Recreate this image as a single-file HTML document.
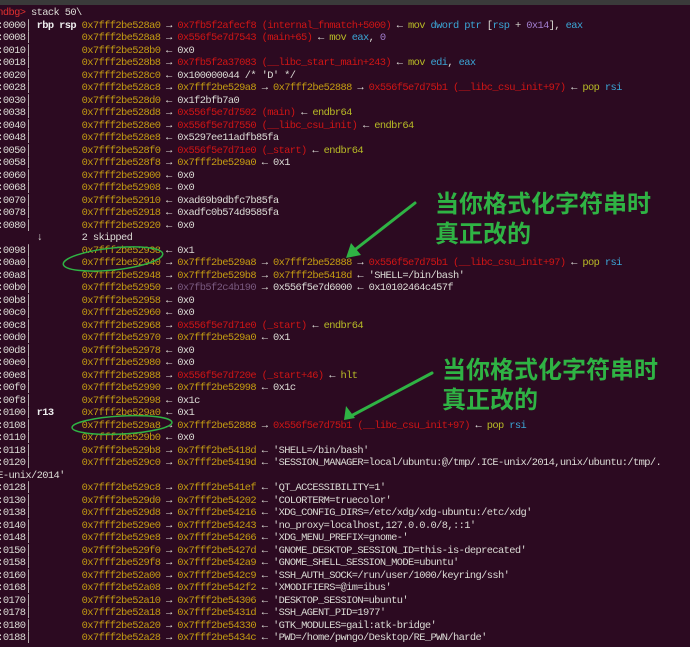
<!DOCTYPE html>
<html><head><meta charset="utf-8"><style>
html,body{margin:0;padding:0;width:690px;height:647px;overflow:hidden;background:#2c0a21;}
#bar{position:absolute;left:0;top:0;width:690px;height:5px;background:#3a3a3a;}
pre{position:absolute;left:-14px;top:7px;margin:0;font-family:"Liberation Mono",monospace;font-size:10.4px;letter-spacing:-0.61px;line-height:12.5px;color:#dcdcd6;white-space:pre;}
.y{color:#c49c12}.r{color:#d01515}.g{color:#b8bb26}.c{color:#3ba6d6}.p{color:#a27fd0}.d{color:#7a5a80}.k{color:#e03030}.b{font-weight:bold;color:#eeeeee}
.ann{position:absolute;font-family:"Noto Sans CJK SC",sans-serif;font-weight:bold;font-size:24px;line-height:30px;color:#2fb344;}
svg{position:absolute;left:0;top:0;}
</style></head><body>
<div id="bar"></div>
<pre><span class="k">pwndbg&gt;</span> stack 50\
00:0000│ <span class="b">rbp rsp</span> <span class="y">0x7fff2be528a0</span> → <span class="r">0x7fb5f2afecf8 (internal_fnmatch+5000)</span> ← <span class="g">mov</span> <span class="c">dword ptr</span> [<span class="c">rsp</span> + <span class="p">0x14</span>], <span class="c">eax</span>
01:0008│         <span class="y">0x7fff2be528a8</span> → <span class="r">0x556f5e7d7543 (main+65)</span> ← <span class="g">mov</span> <span class="c">eax</span>, <span class="p">0</span>
02:0010│         <span class="y">0x7fff2be528b0</span> ← 0x0
03:0018│         <span class="y">0x7fff2be528b8</span> → <span class="r">0x7fb5f2a37083 (__libc_start_main+243)</span> ← <span class="g">mov</span> <span class="c">edi</span>, <span class="c">eax</span>
04:0020│         <span class="y">0x7fff2be528c0</span> ← 0x100000044 /* 'D' */
05:0028│         <span class="y">0x7fff2be528c8</span> → <span class="y">0x7fff2be529a8</span> → <span class="y">0x7fff2be52888</span> → <span class="r">0x556f5e7d75b1 (__libc_csu_init+97)</span> ← <span class="g">pop</span> <span class="c">rsi</span>
06:0030│         <span class="y">0x7fff2be528d0</span> ← 0x1f2bfb7a0
07:0038│         <span class="y">0x7fff2be528d8</span> → <span class="r">0x556f5e7d7502 (main)</span> ← <span class="g">endbr64</span>
08:0040│         <span class="y">0x7fff2be528e0</span> → <span class="r">0x556f5e7d7550 (__libc_csu_init)</span> ← <span class="g">endbr64</span>
09:0048│         <span class="y">0x7fff2be528e8</span> ← 0x5297ee11adfb85fa
0a:0050│         <span class="y">0x7fff2be528f0</span> → <span class="r">0x556f5e7d71e0 (_start)</span> ← <span class="g">endbr64</span>
0b:0058│         <span class="y">0x7fff2be528f8</span> → <span class="y">0x7fff2be529a0</span> ← 0x1
0c:0060│         <span class="y">0x7fff2be52900</span> ← 0x0
0d:0068│         <span class="y">0x7fff2be52908</span> ← 0x0
0e:0070│         <span class="y">0x7fff2be52910</span> ← 0xad69b9dbfc7b85fa
0f:0078│         <span class="y">0x7fff2be52918</span> ← 0xadfc0b574d9585fa
10:0080│         <span class="y">0x7fff2be52920</span> ← 0x0
         ↓       2 skipped
13:0098│         <span class="y">0x7fff2be52938</span> ← 0x1
14:00a0│         <span class="y">0x7fff2be52940</span> → <span class="y">0x7fff2be529a8</span> → <span class="y">0x7fff2be52888</span> → <span class="r">0x556f5e7d75b1 (__libc_csu_init+97)</span> ← <span class="g">pop</span> <span class="c">rsi</span>
15:00a8│         <span class="y">0x7fff2be52948</span> → <span class="y">0x7fff2be529b8</span> → <span class="y">0x7fff2be5418d</span> ← 'SHELL=/bin/bash'
16:00b0│         <span class="y">0x7fff2be52950</span> → <span class="d">0x7fb5f2c4b190</span> → 0x556f5e7d6000 ← 0x10102464c457f
17:00b8│         <span class="y">0x7fff2be52958</span> ← 0x0
18:00c0│         <span class="y">0x7fff2be52960</span> ← 0x0
19:00c8│         <span class="y">0x7fff2be52968</span> → <span class="r">0x556f5e7d71e0 (_start)</span> ← <span class="g">endbr64</span>
1a:00d0│         <span class="y">0x7fff2be52970</span> → <span class="y">0x7fff2be529a0</span> ← 0x1
1b:00d8│         <span class="y">0x7fff2be52978</span> ← 0x0
1c:00e0│         <span class="y">0x7fff2be52980</span> ← 0x0
1d:00e8│         <span class="y">0x7fff2be52988</span> → <span class="r">0x556f5e7d720e (_start+46)</span> ← <span class="g">hlt</span>
1e:00f0│         <span class="y">0x7fff2be52990</span> → <span class="y">0x7fff2be52998</span> ← 0x1c
1f:00f8│         <span class="y">0x7fff2be52998</span> ← 0x1c
20:0100│ <span class="b">r13</span>     <span class="y">0x7fff2be529a0</span> ← 0x1
21:0108│         <span class="y">0x7fff2be529a8</span> → <span class="y">0x7fff2be52888</span> → <span class="r">0x556f5e7d75b1 (__libc_csu_init+97)</span> ← <span class="g">pop</span> <span class="c">rsi</span>
22:0110│         <span class="y">0x7fff2be529b0</span> ← 0x0
23:0118│         <span class="y">0x7fff2be529b8</span> → <span class="y">0x7fff2be5418d</span> ← 'SHELL=/bin/bash'
24:0120│         <span class="y">0x7fff2be529c0</span> → <span class="y">0x7fff2be5419d</span> ← 'SESSION_MANAGER=local/ubuntu:@/tmp/.ICE-unix/2014,unix/ubuntu:/tmp/.
ICE-unix/2014'
25:0128│         <span class="y">0x7fff2be529c8</span> → <span class="y">0x7fff2be541ef</span> ← 'QT_ACCESSIBILITY=1'
26:0130│         <span class="y">0x7fff2be529d0</span> → <span class="y">0x7fff2be54202</span> ← 'COLORTERM=truecolor'
27:0138│         <span class="y">0x7fff2be529d8</span> → <span class="y">0x7fff2be54216</span> ← 'XDG_CONFIG_DIRS=/etc/xdg/xdg-ubuntu:/etc/xdg'
28:0140│         <span class="y">0x7fff2be529e0</span> → <span class="y">0x7fff2be54243</span> ← 'no_proxy=localhost,127.0.0.0/8,::1'
29:0148│         <span class="y">0x7fff2be529e8</span> → <span class="y">0x7fff2be54266</span> ← 'XDG_MENU_PREFIX=gnome-'
2a:0150│         <span class="y">0x7fff2be529f0</span> → <span class="y">0x7fff2be5427d</span> ← 'GNOME_DESKTOP_SESSION_ID=this-is-deprecated'
2b:0158│         <span class="y">0x7fff2be529f8</span> → <span class="y">0x7fff2be542a9</span> ← 'GNOME_SHELL_SESSION_MODE=ubuntu'
2c:0160│         <span class="y">0x7fff2be52a00</span> → <span class="y">0x7fff2be542c9</span> ← 'SSH_AUTH_SOCK=/run/user/1000/keyring/ssh'
2d:0168│         <span class="y">0x7fff2be52a08</span> → <span class="y">0x7fff2be542f2</span> ← 'XMODIFIERS=@im=ibus'
2e:0170│         <span class="y">0x7fff2be52a10</span> → <span class="y">0x7fff2be54306</span> ← 'DESKTOP_SESSION=ubuntu'
2f:0178│         <span class="y">0x7fff2be52a18</span> → <span class="y">0x7fff2be5431d</span> ← 'SSH_AGENT_PID=1977'
30:0180│         <span class="y">0x7fff2be52a20</span> → <span class="y">0x7fff2be54330</span> ← 'GTK_MODULES=gail:atk-bridge'
31:0188│         <span class="y">0x7fff2be52a28</span> → <span class="y">0x7fff2be5434c</span> ← 'PWD=/home/pwngo/Desktop/RE_PWN/harde'</pre>
<div class="ann" style="left:435px;top:187px;">当你格式化字符串时<br>真正改的</div>
<div class="ann" style="left:442px;top:353px;">当你格式化字符串时<br>真正改的</div>
<svg width="690" height="647" viewBox="0 0 690 647">
<g stroke="#2fb344" stroke-width="3" fill="none" stroke-linecap="round">
<line x1="415" y1="203" x2="352" y2="252"/>
<line x1="432" y1="373" x2="351" y2="416"/>
</g>
<polygon points="346,258 351,243 361,255" fill="#2fb344"/>
<polygon points="344,420 346,406 355,418" fill="#2fb344"/>
<g stroke="#2fb344" stroke-width="1.5" fill="none">
<ellipse cx="113" cy="259" rx="50" ry="11" transform="rotate(-6 113 259)"/>
<ellipse cx="122" cy="425" rx="50" ry="9" transform="rotate(-3 122 425)"/>
</g>
</svg>
</body></html>
